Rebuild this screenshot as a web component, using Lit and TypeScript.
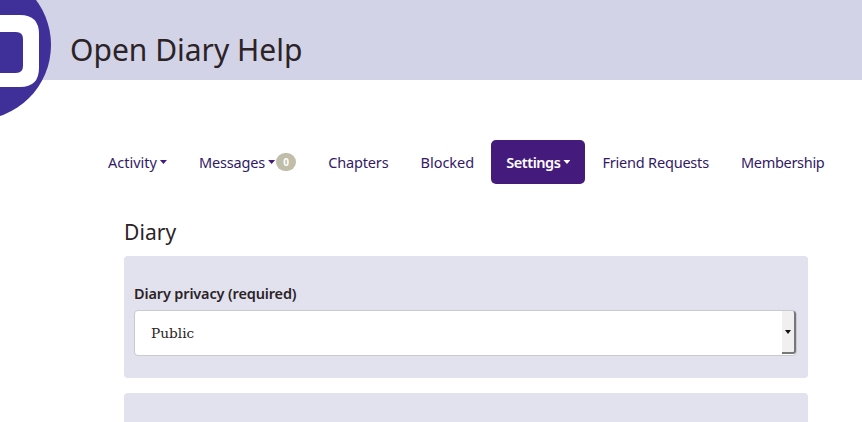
import { LitElement, html, css } from "lit";
import { customElement } from "lit/decorators.js";

@customElement("app-root")
export class AppRoot extends LitElement {
  static styles = css`
    :host { display: block; width: 862px; height: 422px; overflow: hidden; position: relative; background: #fff; font-family: "Noto Sans", sans-serif; }
    .logo { position: absolute; left: 0; top: 0; }
    .header { height: 80px; background: #d3d3e8; box-sizing: border-box; padding: 20px 0 0 70px; display: flex; align-items: center; }
    .header h1 { margin: 0; font-size: 30px; font-weight: 400; color: #2b2326; letter-spacing: 0; line-height: 40px; }
    nav { display: flex; gap: 2px; margin-top: 60px; padding-left: 93px; }
    nav a { height: 44px; box-sizing: border-box; padding: 0 15px; display: flex; align-items: center; color: #321a66; font-size: 14.5px; letter-spacing: -0.15px; border-radius: 4px; white-space: nowrap; }
    nav a.active { background: #441a7d; color: #fff; font-weight: 600; letter-spacing: -0.45px; border-radius: 5px; }
    nav a.wide { letter-spacing: 0; }
    nav a.fr { letter-spacing: -0.2px; }
    nav a.tight { letter-spacing: -0.3px; }
    .caret { width: 7px; height: 4px; background: #441a7d; clip-path: polygon(0 0, 100% 0, 50% 100%); margin-left: 3px; }
    nav a.active .caret { background: #fff; }
    .badge { margin-left: 1px; width: 20px; height: 18px; border-radius: 9px; background: #c0bda8; color: #fff; font-size: 10px; font-weight: 700; display: flex; align-items: center; justify-content: center; letter-spacing: 0; }
    main { margin: 33px 0 0 124px; width: 684px; }
    h2 { margin: 0 0 9px; font-size: 21px; font-weight: 400; color: #2b2326; line-height: 30px; letter-spacing: 0.1px; }
    .card { background: #e2e2ee; border-radius: 4px; }
    .card.first { height: 122px; box-sizing: border-box; padding: 27px 11px 0 10px; margin-bottom: 15px; }
    .card.next { height: 60px; }
    label { display: block; font-size: 14.5px; font-weight: 600; color: #2b2326; line-height: 20px; letter-spacing: -0.15px; margin-bottom: 7px; }
    .select { height: 46px; background: #fff; border: 1px solid #c9c9d2; border-radius: 4px; box-sizing: border-box; display: flex; align-items: stretch; justify-content: space-between; font-family: "DejaVu Serif", serif; font-size: 13.7px; color: #2b2326; padding-left: 16px; }
    .select span { align-self: center; }
    .btn { width: 14px; box-sizing: border-box; background: #f0f0f0; border-right: 2px solid #77777a; border-bottom: 2px solid #77777a; margin: 0 0 1px; border-radius: 0 3px 3px 0; display: flex; align-items: center; justify-content: center; }
    .btn i { width: 0; height: 0; border-left: 3px solid transparent; border-right: 3px solid transparent; border-top: 4px solid #111; }
  `;

  render() {
    return html`
      <div class="header"><h1>Open Diary Help</h1></div>
      <svg class="logo" width="60" height="125" viewBox="0 0 60 125">
        <circle cx="-24" cy="45" r="75" fill="#3f2f99"></circle>
        <path fill-rule="evenodd" fill="#fff" d="M-30 15H20Q39 15 39 34V68Q39 87 20 87H-30ZM-30 32V73H16Q23 73 23 66V39Q23 32 16 32Z"></path>
      </svg>
      <nav>
        <a class="wide">Activity<span class="caret"></span></a>
        <a>Messages<span class="caret"></span><span class="badge">0</span></a>
        <a>Chapters</a>
        <a class="wide">Blocked</a>
        <a class="active">Settings<span class="caret"></span></a>
        <a class="fr">Friend Requests</a>
        <a class="tight">Membership</a>
      </nav>
      <main>
        <h2>Diary</h2>
        <div class="card first">
          <label>Diary privacy (required)</label>
          <div class="select"><span>Public</span><div class="btn"><i></i></div></div>
        </div>
        <div class="card next"></div>
      </main>
    `;
  }
}
